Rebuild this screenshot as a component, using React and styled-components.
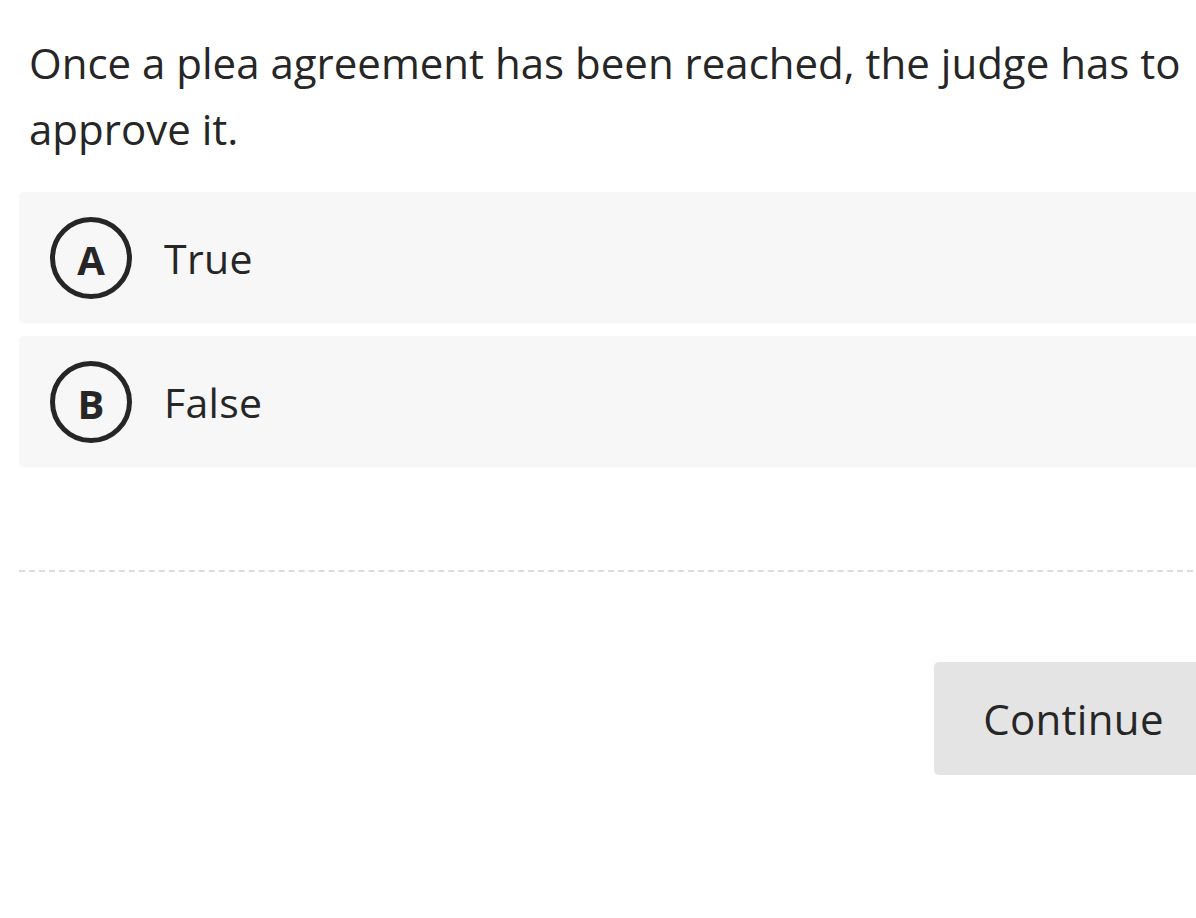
import React from "react";
import styled, { createGlobalStyle } from "styled-components";

const Global = createGlobalStyle`
  html, body {
    margin: 0;
    padding: 0;
    background: #fff;
    overflow: hidden;
  }
  body {
    font-family: "Open Sans", "Noto Sans", sans-serif;
    color: #262626;
  }
`;

const Page = styled.div`
  width: 1194px;
  padding: 30px 0 0 19px;
`;

const Question = styled.p`
  margin: 0 0 30px;
  padding-left: 10px;
  font-size: 42px;
  line-height: 66px;
  color: #262626;
`;

const Options = styled.div`
  display: flex;
  flex-direction: column;
  gap: 13px;
`;

const Option = styled.div`
  display: flex;
  align-items: center;
  gap: 32px;
  height: 131px;
  padding-left: 31px;
  background: #f7f7f7;
  border-radius: 5px;
  box-sizing: border-box;
`;

const Badge = styled.span`
  display: flex;
  align-items: center;
  justify-content: center;
  width: 82px;
  height: 82px;
  border: 5px solid #262626;
  border-radius: 50%;
  box-sizing: border-box;
  font-size: 40px;
  font-weight: 700;
  line-height: 1;
  padding-top: 4px;
`;

const Label = styled.span`
  font-size: 41px;
  letter-spacing: 0.3px;
  color: #262626;
`;

const Divider = styled.hr`
  margin: 103px 0 0;
  border: 0;
  border-top: 2px dashed #dcdcdc;
`;

const Footer = styled.div`
  display: flex;
  justify-content: flex-end;
  margin-top: 90px;
`;

const Button = styled.button`
  width: 279px;
  height: 113px;
  border: 0;
  border-radius: 5px;
  background: #e4e4e4;
  color: #262626;
  font-family: inherit;
  font-size: 42px;
  letter-spacing: 0.3px;
`;

const choices = [
  { key: "A", text: "True" },
  { key: "B", text: "False" },
];

export default function App() {
  return (
    <Page>
      <Global />
      <Question>
        Once a plea agreement has been reached, the judge has to approve it.
      </Question>
      <Options>
        {choices.map((c) => (
          <Option key={c.key}>
            <Badge>{c.key}</Badge>
            <Label>{c.text}</Label>
          </Option>
        ))}
      </Options>
      <Divider />
      <Footer>
        <Button>Continue</Button>
      </Footer>
    </Page>
  );
}
